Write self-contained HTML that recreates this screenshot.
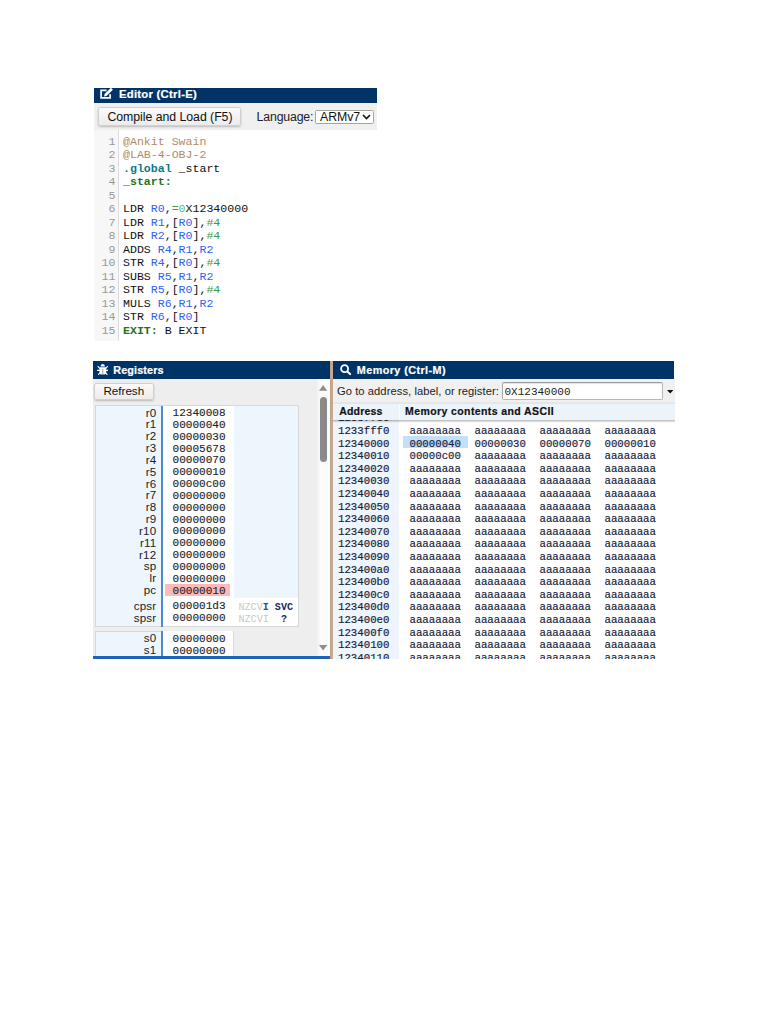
<!DOCTYPE html>
<html lang="en"><head><meta charset="utf-8"><title>CPUlator screenshots</title>
<style>
html,body{margin:0;padding:0;background:#fff;}
body{width:768px;height:1024px;position:relative;overflow:hidden;font-family:"Liberation Sans",sans-serif;color:#111;}
.b{position:absolute;box-sizing:border-box;}
.t{position:absolute;white-space:pre;margin:0;}
.hd{background:#003366;color:#fff;font-weight:bold;font-size:11.6px;}
.sans{font-family:"Liberation Sans",sans-serif;}
.mono{font-family:"Liberation Mono",monospace;}
.code{font-size:11.58px;line-height:13.53px;height:13.53px;color:#111;}
.ln{font-size:11.58px;line-height:13.53px;height:13.53px;color:#999;text-align:right;width:20px;}
.c{color:#b08a68;} .k{color:#0a7a85;font-weight:bold;} .l{color:#1f731f;font-weight:bold;}
.r{color:#2f62f5;} .n{color:#3a9a4a;}
.reg{font-size:11.6px;line-height:12px;height:12px;text-align:right;width:50px;color:#222;letter-spacing:.15px;}
.val{-webkit-text-stroke:.1px #222;font-size:11.05px;line-height:12px;height:12px;color:#222;}
.fl{font-size:10.1px;line-height:12px;height:12px;}
.ad{-webkit-text-stroke:.16px #16213a;font-size:10.72px;line-height:12px;height:12px;color:#16213a;}
.dt{-webkit-text-stroke:.16px #16213a;font-size:10.72px;line-height:12px;height:12px;color:#16213a;}
.btn{background:linear-gradient(#fafafa,#ececec);border:1px solid #d0d0d0;border-radius:2.5px;box-shadow:0 1px 2px rgba(0,0,0,.22);}
</style></head><body>

<div class="b hd" style="left:93.5px;top:88.3px;width:283.5px;height:14.4px;"></div>
<svg class="b" style="left:100px;top:88.3px" width="13" height="11" viewBox="0 0 13 11"><path d="M6.6 2.3H1.1v7.6h9V6.2" fill="none" stroke="#fff" stroke-width="1.7"/><path d="M4.1 8.5l.5-2.4L10.9-.3l2 2L6.5 8z" fill="#fff"/></svg>
<div class="t sans" style="left:118.95px;top:86.88px;line-height:14px;height:14px;font-size:11.3px;letter-spacing:0.269px;color:#fff;font-weight:bold;-webkit-text-stroke:.2px #fff;">Editor (Ctrl-E)</div>
<div class="b " style="left:93.5px;top:103px;width:283.5px;height:27px;background:#f0f0f0;"></div>
<div class="b btn" style="left:97.5px;top:107px;width:143.5px;height:19px;"></div>
<div class="t sans" style="left:107.38px;top:109.54px;line-height:14px;height:14px;font-size:12.3px;letter-spacing:-0.031px;color:#111;">Compile and Load (F5)</div>
<div class="t sans" style="left:256.6px;top:109.74px;line-height:14px;height:14px;font-size:12.3px;letter-spacing:-0.159px;color:#222;">Language:</div>
<div class="b " style="left:315.3px;top:109.7px;width:58.7px;height:14.8px;background:#fff;border:1px solid #a6a6a6;border-radius:1.5px;"></div>
<div class="t sans" style="left:320.0px;top:109.74px;line-height:14px;height:14px;font-size:12.3px;letter-spacing:-0.052px;color:#111;">ARMv7</div>
<svg class="b" style="left:362px;top:114px" width="9" height="6" viewBox="0 0 9 6"><path d="M1 1l3.5 3.5L8 1" fill="none" stroke="#111" stroke-width="1.6"/></svg>
<div class="b " style="left:93.5px;top:130px;width:25.5px;height:210.6px;background:#f7f7f7;border-right:1px solid #ddd;"></div>
<div class="t mono ln" style="left:95.5px;top:134.74px">1</div>
<div class="t mono code" style="left:123px;top:134.74px"><span class="c">@Ankit Swain</span></div>
<div class="t mono ln" style="left:95.5px;top:148.24px">2</div>
<div class="t mono code" style="left:123px;top:148.24px"><span class="c">@LAB-4-OBJ-2</span></div>
<div class="t mono ln" style="left:95.5px;top:161.74px">3</div>
<div class="t mono code" style="left:123px;top:161.74px"><span class="k">.global</span> _start</div>
<div class="t mono ln" style="left:95.5px;top:175.24px">4</div>
<div class="t mono code" style="left:123px;top:175.24px"><span class="l">_start:</span></div>
<div class="t mono ln" style="left:95.5px;top:188.74px">5</div>
<div class="t mono code" style="left:123px;top:188.74px"></div>
<div class="t mono ln" style="left:95.5px;top:202.24px">6</div>
<div class="t mono code" style="left:123px;top:202.24px">LDR <span class="r">R0</span>,<span class="n">=</span><span class="n" style="color:#62b878">0</span>X12340000</div>
<div class="t mono ln" style="left:95.5px;top:215.74px">7</div>
<div class="t mono code" style="left:123px;top:215.74px">LDR <span class="r">R1</span>,[<span class="r">R0</span>],<span class="n">#4</span></div>
<div class="t mono ln" style="left:95.5px;top:229.24px">8</div>
<div class="t mono code" style="left:123px;top:229.24px">LDR <span class="r">R2</span>,[<span class="r">R0</span>],<span class="n">#4</span></div>
<div class="t mono ln" style="left:95.5px;top:242.74px">9</div>
<div class="t mono code" style="left:123px;top:242.74px">ADDS <span class="r">R4</span>,<span class="r">R1</span>,<span class="r">R2</span></div>
<div class="t mono ln" style="left:95.5px;top:256.24px">10</div>
<div class="t mono code" style="left:123px;top:256.24px">STR <span class="r">R4</span>,[<span class="r">R0</span>],<span class="n">#4</span></div>
<div class="t mono ln" style="left:95.5px;top:269.74px">11</div>
<div class="t mono code" style="left:123px;top:269.74px">SUBS <span class="r">R5</span>,<span class="r">R1</span>,<span class="r">R2</span></div>
<div class="t mono ln" style="left:95.5px;top:283.24px">12</div>
<div class="t mono code" style="left:123px;top:283.24px">STR <span class="r">R5</span>,[<span class="r">R0</span>],<span class="n">#4</span></div>
<div class="t mono ln" style="left:95.5px;top:296.74px">13</div>
<div class="t mono code" style="left:123px;top:296.74px">MULS <span class="r">R6</span>,<span class="r">R1</span>,<span class="r">R2</span></div>
<div class="t mono ln" style="left:95.5px;top:310.24px">14</div>
<div class="t mono code" style="left:123px;top:310.24px">STR <span class="r">R6</span>,[<span class="r">R0</span>]</div>
<div class="t mono ln" style="left:95.5px;top:323.74px">15</div>
<div class="t mono code" style="left:123px;top:323.74px"><span class="l">EXIT:</span> B EXIT</div>
<div class="b hd" style="left:93.1px;top:361px;width:236.9px;height:17.5px;"></div>
<svg class="b" style="left:96.8px;top:364.1px" width="11.5" height="11" viewBox="0 0 11.5 11"><g fill="#fff"><path d="M3.5 2.6a2.25 2.5 0 014.5 0z"/><path d="M2.5 3.3h6.7v4.7a2.6 2.6 0 01-2.6 2.6h-1.5a2.6 2.6 0 01-2.6-2.6z"/></g><g stroke="#fff" stroke-width="1.1" fill="none"><path d="M0 6.4h11.5M.7 2.1l2.3 2.5M10.8 2.1L8.6 4.6M1.2 10.9l2-2.5M10.4 10.9l-2-2.5"/></g><path d="M5.75 5v5.6" stroke="#003366" stroke-width=".45"/></svg>
<div class="t sans" style="left:113.31px;top:363.36px;line-height:14px;height:14px;font-size:10.8px;letter-spacing:0.129px;color:#fff;font-weight:bold;-webkit-text-stroke:.2px #fff;">Registers</div>
<div class="b " style="left:93.1px;top:378.5px;width:236.9px;height:278.0px;background:#eeeeee;"></div>
<div class="b btn" style="left:94px;top:383px;width:59.75px;height:17.3px;"></div>
<div class="t sans" style="left:103.46px;top:383.94px;line-height:14px;height:14px;font-size:11.7px;letter-spacing:-0.032px;color:#111;">Refresh</div>
<div class="b " style="left:317px;top:378.5px;width:13px;height:278.0px;background:linear-gradient(90deg,#f1f1f1,#fbfbfb 30%);"></div>
<svg class="b" style="left:319.3px;top:385px" width="8.2" height="5.8" viewBox="0 0 8.2 5.8"><path d="M0 5.8L4.1 0 8.2 5.8z" fill="#8e8e8e"/></svg>
<div class="b " style="left:320px;top:397px;width:7px;height:65.3px;background:#8a8a8a;border-radius:3.5px;"></div>
<svg class="b" style="left:319.3px;top:645px" width="8.2" height="5.6" viewBox="0 0 8.2 5.6"><path d="M0 0L4.1 5.6 8.2 0z" fill="#8e8e8e"/></svg>
<div class="b " style="left:95px;top:405.4px;width:204px;height:221.6px;background:#eef6fd;border:1px solid #d6d9dc;"></div>
<div class="b " style="left:163px;top:406px;width:70.5px;height:220px;background:#fff;"></div>
<div class="b " style="left:233.5px;top:598px;width:64.5px;height:28px;background:#fff;"></div>
<div class="b " style="left:160.7px;top:405.5px;width:2.0px;height:221.5px;background:#4f8acc;"></div>
<div class="b " style="left:95px;top:630.6px;width:138.5px;height:25.9px;background:#eef6fd;border:1px solid #d6d9dc;border-bottom:none;"></div>
<div class="b " style="left:163px;top:631.2px;width:70px;height:25.3px;background:#fff;"></div>
<div class="b " style="left:160.7px;top:631px;width:2.0px;height:25.5px;background:#4f8acc;"></div>
<div class="b " style="left:165px;top:584px;width:65px;height:12px;background:#ffb9b9;"></div>
<div class="t sans reg" style="left:106.3px;top:406.6px">r0</div>
<div class="t mono val" style="left:172.5px;top:407.0px">12340008</div>
<div class="t sans reg" style="left:106.3px;top:418.43px">r1</div>
<div class="t mono val" style="left:172.5px;top:418.83px">00000040</div>
<div class="t sans reg" style="left:106.3px;top:430.27px">r2</div>
<div class="t mono val" style="left:172.5px;top:430.67px">00000030</div>
<div class="t sans reg" style="left:106.3px;top:442.1px">r3</div>
<div class="t mono val" style="left:172.5px;top:442.5px">00005678</div>
<div class="t sans reg" style="left:106.3px;top:453.93px">r4</div>
<div class="t mono val" style="left:172.5px;top:454.33px">00000070</div>
<div class="t sans reg" style="left:106.3px;top:465.77px">r5</div>
<div class="t mono val" style="left:172.5px;top:466.17px">00000010</div>
<div class="t sans reg" style="left:106.3px;top:477.6px">r6</div>
<div class="t mono val" style="left:172.5px;top:478.0px">00000c00</div>
<div class="t sans reg" style="left:106.3px;top:489.43px">r7</div>
<div class="t mono val" style="left:172.5px;top:489.83px">00000000</div>
<div class="t sans reg" style="left:106.3px;top:501.26px">r8</div>
<div class="t mono val" style="left:172.5px;top:501.66px">00000000</div>
<div class="t sans reg" style="left:106.3px;top:513.1px">r9</div>
<div class="t mono val" style="left:172.5px;top:513.5px">00000000</div>
<div class="t sans reg" style="left:106.3px;top:524.93px">r10</div>
<div class="t mono val" style="left:172.5px;top:525.33px">00000000</div>
<div class="t sans reg" style="left:106.3px;top:536.76px">r11</div>
<div class="t mono val" style="left:172.5px;top:537.16px">00000000</div>
<div class="t sans reg" style="left:106.3px;top:548.6px">r12</div>
<div class="t mono val" style="left:172.5px;top:549.0px">00000000</div>
<div class="t sans reg" style="left:106.3px;top:560.43px">sp</div>
<div class="t mono val" style="left:172.5px;top:560.83px">00000000</div>
<div class="t sans reg" style="left:106.3px;top:572.26px">lr</div>
<div class="t mono val" style="left:172.5px;top:572.66px">00000000</div>
<div class="t sans reg" style="left:106.3px;top:584.1px">pc</div>
<div class="t mono val" style="left:172.5px;top:584.5px">00000010</div>
<div class="t sans reg" style="left:106.3px;top:599.6px">cpsr</div>
<div class="t mono val" style="left:172.5px;top:600.4px">000001d3</div>
<div class="t sans reg" style="left:106.3px;top:611.6px">spsr</div>
<div class="t mono val" style="left:172.5px;top:612.4px">00000000</div>
<div class="t sans reg" style="left:106.3px;top:632.1px">s0</div>
<div class="t mono val" style="left:172.5px;top:632.9px">00000000</div>
<div class="t sans reg" style="left:106.3px;top:644.0px">s1</div>
<div class="t mono val" style="left:172.5px;top:644.8px">00000000</div>
<div class="t mono fl" style="left:238.5px;top:601.9px"><span style="color:#c8c8c8">NZCV</span><span style="color:#2a4f9e;font-weight:bold">I</span> <span style="color:#1a2a66;font-weight:bold">SVC</span></div>
<div class="t mono fl" style="left:238.5px;top:613.6px"><span style="color:#c8c8c8">NZCVI</span>  <span style="color:#1a2a66;font-weight:bold">?</span></div>
<div class="b " style="left:93.1px;top:656.3px;width:236.9px;height:2.9px;background:#1f63b8;"></div>
<div class="b " style="left:330px;top:361px;width:3.3px;height:298.2px;background:linear-gradient(90deg,#b89a7e,#c8aa8e 40%,#c4a890);"></div>
<div class="b hd" style="left:333.2px;top:361px;width:341.3px;height:17.5px;"></div>
<svg class="b" style="left:339px;top:363px" width="14" height="14" viewBox="0 0 14 14"><circle cx="5.6" cy="5.7" r="3.5" fill="none" stroke="#fff" stroke-width="1.8"/><path d="M8.3 8.4l2.8 2.7" stroke="#fff" stroke-width="2.1" stroke-linecap="round"/></svg>
<div class="t sans" style="left:356.81px;top:363.26px;line-height:14px;height:14px;font-size:10.8px;letter-spacing:0.422px;color:#fff;font-weight:bold;-webkit-text-stroke:.2px #fff;">Memory (Ctrl-M)</div>
<div class="b " style="left:333.2px;top:378.5px;width:341.4px;height:25.5px;background:#f0f0f0;"></div>
<div class="b " style="left:333.2px;top:402.3px;width:341.4px;height:1.7px;background:#e6e6e6;"></div>
<div class="t sans" style="left:336.94px;top:384.32px;line-height:14px;height:14px;font-size:11.2px;letter-spacing:0.065px;color:#222;">Go to address, label, or register:</div>
<div class="b " style="left:501.75px;top:382.3px;width:160.85px;height:18.1px;background:#fff;border:1px solid #b8b8b8;border-top-color:#9c9c9c;border-left-color:#a8a8a8;border-radius:2px;box-shadow:inset 0 1px 1px rgba(0,0,0,.12);"></div>
<div class="t mono" style="left:504.5px;top:385.5px;line-height:12px;height:12px;font-size:11px;color:#222;">0X12340000</div>
<svg class="b" style="left:667.4px;top:390px" width="6.4" height="3.6" viewBox="0 0 6.4 3.6"><path d="M0 0h6.4L3.2 3.6z" fill="#111"/></svg>
<div class="b " style="left:333.2px;top:404px;width:341.4px;height:255.2px;background:#fff;"></div>
<div class="b " style="left:333.2px;top:404px;width:65.5px;height:255.2px;background:#eef5fc;"></div>
<div class="b " style="left:333.2px;top:404px;width:341.4px;height:15.9px;background:#ecf4fb;"></div>
<div class="b " style="left:398.5px;top:404px;width:1.7px;height:15.9px;background:linear-gradient(90deg,#d4dce6,#fafcff 45%);"></div>
<div class="t sans" style="left:339.25px;top:403.96px;line-height:14px;height:14px;font-size:10.5px;letter-spacing:0.188px;color:#111;font-weight:bold;-webkit-text-stroke:.2px #111;">Address</div>
<div class="t sans" style="left:405.11px;top:403.96px;line-height:14px;height:14px;font-size:10.5px;letter-spacing:0.396px;color:#111;font-weight:bold;-webkit-text-stroke:.2px #111;">Memory contents and ASCII</div>
<div class="b " style="left:403px;top:436px;width:64.5px;height:12px;background:#c4dffa;"></div>
<div class="b" style="left:333.5px;top:419.9px;width:341.1px;height:239.3px;overflow:hidden;">
<div class="t mono ad" style="left:4.5px;top:-8.3px">1233ffe0</div>
<div class="t mono ad" style="left:4.5px;top:5.2px">1233fff0</div>
<div class="t mono dt" style="left:76.0px;top:5.2px">aaaaaaaa</div>
<div class="t mono dt" style="left:141.0px;top:5.2px">aaaaaaaa</div>
<div class="t mono dt" style="left:206.0px;top:5.2px">aaaaaaaa</div>
<div class="t mono dt" style="left:271.0px;top:5.2px">aaaaaaaa</div>
<div class="t mono ad" style="left:4.5px;top:17.8px">12340000</div>
<div class="t mono dt" style="left:76.0px;top:17.8px">00000040</div>
<div class="t mono dt" style="left:141.0px;top:17.8px">00000030</div>
<div class="t mono dt" style="left:206.0px;top:17.8px">00000070</div>
<div class="t mono dt" style="left:271.0px;top:17.8px">00000010</div>
<div class="t mono ad" style="left:4.5px;top:30.4px">12340010</div>
<div class="t mono dt" style="left:76.0px;top:30.4px">00000c00</div>
<div class="t mono dt" style="left:141.0px;top:30.4px">aaaaaaaa</div>
<div class="t mono dt" style="left:206.0px;top:30.4px">aaaaaaaa</div>
<div class="t mono dt" style="left:271.0px;top:30.4px">aaaaaaaa</div>
<div class="t mono ad" style="left:4.5px;top:43.0px">12340020</div>
<div class="t mono dt" style="left:76.0px;top:43.0px">aaaaaaaa</div>
<div class="t mono dt" style="left:141.0px;top:43.0px">aaaaaaaa</div>
<div class="t mono dt" style="left:206.0px;top:43.0px">aaaaaaaa</div>
<div class="t mono dt" style="left:271.0px;top:43.0px">aaaaaaaa</div>
<div class="t mono ad" style="left:4.5px;top:55.6px">12340030</div>
<div class="t mono dt" style="left:76.0px;top:55.6px">aaaaaaaa</div>
<div class="t mono dt" style="left:141.0px;top:55.6px">aaaaaaaa</div>
<div class="t mono dt" style="left:206.0px;top:55.6px">aaaaaaaa</div>
<div class="t mono dt" style="left:271.0px;top:55.6px">aaaaaaaa</div>
<div class="t mono ad" style="left:4.5px;top:68.2px">12340040</div>
<div class="t mono dt" style="left:76.0px;top:68.2px">aaaaaaaa</div>
<div class="t mono dt" style="left:141.0px;top:68.2px">aaaaaaaa</div>
<div class="t mono dt" style="left:206.0px;top:68.2px">aaaaaaaa</div>
<div class="t mono dt" style="left:271.0px;top:68.2px">aaaaaaaa</div>
<div class="t mono ad" style="left:4.5px;top:80.8px">12340050</div>
<div class="t mono dt" style="left:76.0px;top:80.8px">aaaaaaaa</div>
<div class="t mono dt" style="left:141.0px;top:80.8px">aaaaaaaa</div>
<div class="t mono dt" style="left:206.0px;top:80.8px">aaaaaaaa</div>
<div class="t mono dt" style="left:271.0px;top:80.8px">aaaaaaaa</div>
<div class="t mono ad" style="left:4.5px;top:93.4px">12340060</div>
<div class="t mono dt" style="left:76.0px;top:93.4px">aaaaaaaa</div>
<div class="t mono dt" style="left:141.0px;top:93.4px">aaaaaaaa</div>
<div class="t mono dt" style="left:206.0px;top:93.4px">aaaaaaaa</div>
<div class="t mono dt" style="left:271.0px;top:93.4px">aaaaaaaa</div>
<div class="t mono ad" style="left:4.5px;top:106.0px">12340070</div>
<div class="t mono dt" style="left:76.0px;top:106.0px">aaaaaaaa</div>
<div class="t mono dt" style="left:141.0px;top:106.0px">aaaaaaaa</div>
<div class="t mono dt" style="left:206.0px;top:106.0px">aaaaaaaa</div>
<div class="t mono dt" style="left:271.0px;top:106.0px">aaaaaaaa</div>
<div class="t mono ad" style="left:4.5px;top:118.6px">12340080</div>
<div class="t mono dt" style="left:76.0px;top:118.6px">aaaaaaaa</div>
<div class="t mono dt" style="left:141.0px;top:118.6px">aaaaaaaa</div>
<div class="t mono dt" style="left:206.0px;top:118.6px">aaaaaaaa</div>
<div class="t mono dt" style="left:271.0px;top:118.6px">aaaaaaaa</div>
<div class="t mono ad" style="left:4.5px;top:131.2px">12340090</div>
<div class="t mono dt" style="left:76.0px;top:131.2px">aaaaaaaa</div>
<div class="t mono dt" style="left:141.0px;top:131.2px">aaaaaaaa</div>
<div class="t mono dt" style="left:206.0px;top:131.2px">aaaaaaaa</div>
<div class="t mono dt" style="left:271.0px;top:131.2px">aaaaaaaa</div>
<div class="t mono ad" style="left:4.5px;top:143.8px">123400a0</div>
<div class="t mono dt" style="left:76.0px;top:143.8px">aaaaaaaa</div>
<div class="t mono dt" style="left:141.0px;top:143.8px">aaaaaaaa</div>
<div class="t mono dt" style="left:206.0px;top:143.8px">aaaaaaaa</div>
<div class="t mono dt" style="left:271.0px;top:143.8px">aaaaaaaa</div>
<div class="t mono ad" style="left:4.5px;top:156.4px">123400b0</div>
<div class="t mono dt" style="left:76.0px;top:156.4px">aaaaaaaa</div>
<div class="t mono dt" style="left:141.0px;top:156.4px">aaaaaaaa</div>
<div class="t mono dt" style="left:206.0px;top:156.4px">aaaaaaaa</div>
<div class="t mono dt" style="left:271.0px;top:156.4px">aaaaaaaa</div>
<div class="t mono ad" style="left:4.5px;top:169.0px">123400c0</div>
<div class="t mono dt" style="left:76.0px;top:169.0px">aaaaaaaa</div>
<div class="t mono dt" style="left:141.0px;top:169.0px">aaaaaaaa</div>
<div class="t mono dt" style="left:206.0px;top:169.0px">aaaaaaaa</div>
<div class="t mono dt" style="left:271.0px;top:169.0px">aaaaaaaa</div>
<div class="t mono ad" style="left:4.5px;top:181.6px">123400d0</div>
<div class="t mono dt" style="left:76.0px;top:181.6px">aaaaaaaa</div>
<div class="t mono dt" style="left:141.0px;top:181.6px">aaaaaaaa</div>
<div class="t mono dt" style="left:206.0px;top:181.6px">aaaaaaaa</div>
<div class="t mono dt" style="left:271.0px;top:181.6px">aaaaaaaa</div>
<div class="t mono ad" style="left:4.5px;top:194.2px">123400e0</div>
<div class="t mono dt" style="left:76.0px;top:194.2px">aaaaaaaa</div>
<div class="t mono dt" style="left:141.0px;top:194.2px">aaaaaaaa</div>
<div class="t mono dt" style="left:206.0px;top:194.2px">aaaaaaaa</div>
<div class="t mono dt" style="left:271.0px;top:194.2px">aaaaaaaa</div>
<div class="t mono ad" style="left:4.5px;top:206.8px">123400f0</div>
<div class="t mono dt" style="left:76.0px;top:206.8px">aaaaaaaa</div>
<div class="t mono dt" style="left:141.0px;top:206.8px">aaaaaaaa</div>
<div class="t mono dt" style="left:206.0px;top:206.8px">aaaaaaaa</div>
<div class="t mono dt" style="left:271.0px;top:206.8px">aaaaaaaa</div>
<div class="t mono ad" style="left:4.5px;top:219.4px">12340100</div>
<div class="t mono dt" style="left:76.0px;top:219.4px">aaaaaaaa</div>
<div class="t mono dt" style="left:141.0px;top:219.4px">aaaaaaaa</div>
<div class="t mono dt" style="left:206.0px;top:219.4px">aaaaaaaa</div>
<div class="t mono dt" style="left:271.0px;top:219.4px">aaaaaaaa</div>
<div class="t mono ad" style="left:4.5px;top:232.0px">12340110</div>
<div class="t mono dt" style="left:76.0px;top:232.0px">aaaaaaaa</div>
<div class="t mono dt" style="left:141.0px;top:232.0px">aaaaaaaa</div>
<div class="t mono dt" style="left:206.0px;top:232.0px">aaaaaaaa</div>
<div class="t mono dt" style="left:271.0px;top:232.0px">aaaaaaaa</div>
</div>
<div class="b " style="left:333.2px;top:419.9px;width:341.4px;height:2.7px;background:linear-gradient(rgba(0,0,0,.30),rgba(0,0,0,.10) 55%,rgba(0,0,0,0));"></div>
</body></html>
